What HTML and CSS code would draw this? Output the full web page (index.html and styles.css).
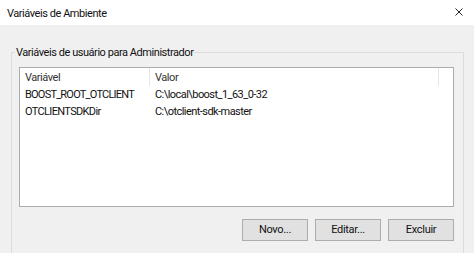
FILE: index.html
```html
<!DOCTYPE html>
<html lang="pt-BR">
<head>
<meta charset="utf-8">
<title>Variáveis de Ambiente</title>
<link rel="stylesheet" href="styles.css">
</head>
<body>
<div class="window">
  <div class="titlebar">
    <span class="title">Variáveis de Ambiente</span>
    <span class="close" aria-label="Fechar">
      <svg width="8" height="8" viewBox="0 0 8 8"><path d="M0.5 0.5 L7.5 7.5 M7.5 0.5 L0.5 7.5" stroke="#222" stroke-width="1" fill="none"/></svg>
    </span>
  </div>
  <div class="body">
    <div class="group">
      <span class="legend">Variáveis de usuário para Administrador</span>
      <div class="list">
        <div class="row header">
          <div class="col c1">Variável</div>
          <div class="col c2">Valor</div>
          <div class="col c3"></div>
        </div>
        <div class="row">
          <div class="col c1 caps">BOOST_ROOT_OTCLIENT</div>
          <div class="col c2 val">C:\local\boost_1_63_0-32</div>
        </div>
        <div class="row">
          <div class="col c1 caps2">OTCLIENTSDKDir</div>
          <div class="col c2 val">C:\otclient-sdk-master</div>
        </div>
      </div>
      <div class="buttons">
        <button class="btn">Novo...</button>
        <button class="btn">Editar...</button>
        <button class="btn">Excluir</button>
      </div>
    </div>
  </div>
</div>
</body>
</html>
```
FILE: styles.css
```css
html, body {
  margin: 0;
  padding: 0;
}
body {
  width: 474px;
  height: 253px;
  overflow: hidden;
  background: #f0f0f0;
  font-family: Roboto, "Open Sans", sans-serif;
  font-size: 11px;
  letter-spacing: -0.45px;
  color: #000;
}
.window {
  display: flex;
  flex-direction: column;
  height: 253px;
  overflow: hidden;
}
.titlebar {
  height: 25px;
  flex: none;
  background: #fff;
  display: flex;
  align-items: center;
  justify-content: space-between;
  padding: 0 11px 0 7px;
  line-height: 25px;
}
.title {
  color: #111;
  padding-top: 1px;
}
.close {
  display: flex;
  margin-top: -1px;
}
.body {
  flex: 1;
  background: #f0f0f0;
  padding: 27px 10px 0 11px;
}
.group {
  border: 1px solid #dcdcdc;
  border-bottom: none;
  height: 200px;
}
.legend {
  display: block;
  width: max-content;
  margin: -8px 0 0 3px;
  padding: 0 1px;
  background: #f0f0f0;
  line-height: 16px;
  height: 16px;
  color: #111;
}
.list {
  margin: 6px 0 0 7px;
  width: 433px;
  height: 138px;
  background: #fff;
  border: 1px solid #adadad;
}
.row {
  display: flex;
  height: 17px;
  line-height: 17px;
}
.row.header {
  height: 18px;
  padding-top: 1px;
  box-sizing: border-box;
}
.col {
  white-space: nowrap;
  box-sizing: border-box;
  color: #111;
}
.caps {
  letter-spacing: -0.78px;
}
.caps2 {
  letter-spacing: -0.65px;
}
.val {
  letter-spacing: -0.55px;
}
.c1 {
  width: 130px;
  padding-left: 5px;
}
.c2 {
  width: 289px;
  padding-left: 5px;
}
.header .col {
  border-right: 1px solid #e5e5e5;
  margin-top: -1px;
  padding-top: 1px;
  height: 18px;
  color: #333;
}
.header .c3 {
  border-right: none;
  width: 14px;
}
.buttons {
  display: flex;
  justify-content: flex-end;
  gap: 7px;
  margin: 12px 9px 0 0;
}
.btn {
  width: 66px;
  height: 22px;
  background: #e1e1e1;
  border: 1px solid #adadad;
  font-family: inherit;
  font-size: 11px;
  letter-spacing: -0.3px;
  color: #111;
  padding: 0;
  line-height: 20px;
}
```
